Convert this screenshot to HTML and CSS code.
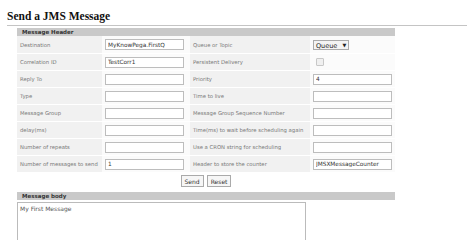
FILE: index.html
```
<!DOCTYPE html>
<html lang="en">
<head>
    <meta charset="UTF-8">
    <title>Send a JMS Message</title>
    <link rel="stylesheet" href="styles.css">
</head>
<body>
    <h1>Send a JMS Message</h1>

    <div class="section">
        <div class="bar">Message Header</div>
        <table class="form">
            <tr>
                <td class="label">Destination</td>
                <td class="field"><input type="text" value="MyKnowPega.FirstQ"></td>
                <td class="label">Queue or Topic</td>
                <td class="field">
                    <span class="select">Queue <span class="arrow">&#9660;</span></span>
                </td>
            </tr>
            <tr>
                <td class="label">Correlation ID</td>
                <td class="field"><input type="text" value="TestCorr1"></td>
                <td class="label">Persistent Delivery</td>
                <td class="field"><span class="check"></span></td>
            </tr>
            <tr>
                <td class="label">Reply To</td>
                <td class="field"><input type="text"></td>
                <td class="label">Priority</td>
                <td class="field"><input type="text" value="4"></td>
            </tr>
            <tr>
                <td class="label">Type</td>
                <td class="field"><input type="text"></td>
                <td class="label">Time to live</td>
                <td class="field"><input type="text"></td>
            </tr>
            <tr>
                <td class="label">Message Group</td>
                <td class="field"><input type="text"></td>
                <td class="label">Message Group Sequence Number</td>
                <td class="field"><input type="text"></td>
            </tr>
            <tr>
                <td class="label">delay(ms)</td>
                <td class="field"><input type="text"></td>
                <td class="label">Time(ms) to wait before scheduling again</td>
                <td class="field"><input type="text"></td>
            </tr>
            <tr>
                <td class="label">Number of repeats</td>
                <td class="field"><input type="text"></td>
                <td class="label">Use a CRON string for scheduling</td>
                <td class="field"><input type="text"></td>
            </tr>
            <tr>
                <td class="label">Number of messages to send</td>
                <td class="field"><input type="text" value="1"></td>
                <td class="label">Header to store the counter</td>
                <td class="field"><input type="text" value="JMSXMessageCounter"></td>
            </tr>
        </table>

        <div class="buttons">
            <button>Send</button>
            <button>Reset</button>
        </div>

        <div class="bar">Message body</div>
        <textarea>My First Message</textarea>
    </div>
</body>
</html>
```

FILE: styles.css
```
body {
    margin: 0;
    padding: 9px 7px 0 7px;
    background-color: white;
    font-family: "DejaVu Sans", Verdana, sans-serif;
    color: #777;
}
h1 {
    font-family: "Liberation Serif", "Times New Roman", serif;
    font-size: 11.5px;
    line-height: 14px;
    font-weight: bold;
    color: #111;
    margin: 0;
    padding-bottom: 2px;
    border-bottom: 1px solid #c4c4c4;
    width: 460px;
}
.section {
    margin: 2px 0 0 10px;
    width: 378px;
}
.bar {
    background-color: #c9c9c9;
    color: #333;
    font-size: 5.5px;
    font-weight: bold;
    height: 8px;
    line-height: 8px;
    padding-left: 5px;
}
.form {
    width: 378px;
    border-collapse: collapse;
    table-layout: fixed;
}
.form td {
    height: 16px;
    padding: 0;
    border-bottom: 1px solid white;
    font-size: 5.3px;
    vertical-align: middle;
}
.form tr:first-child td {
    height: 17px;
}
.form td.label {
    background-color: #f1f1f1;
    padding-left: 3px;
    white-space: nowrap;
}
.form td.field {
    background-color: #fbfbfb;
    padding-left: 3px;
}
.form tr td:nth-child(1) { width: 82px; }
.form tr td:nth-child(2) { width: 85px; }
.form tr td:nth-child(3) { width: 117px; }
.form input[type="text"] {
    box-sizing: border-box;
    width: 79px;
    height: 11px;
    margin: 0;
    padding: 0 2px;
    border: 1px solid #bdbdbd;
    font-family: "DejaVu Sans", Verdana, sans-serif;
    font-size: 5.8px;
    color: #333;
    background-color: white;
}
.select {
    display: inline-block;
    box-sizing: border-box;
    height: 10px;
    line-height: 8px;
    padding: 0 2px;
    border: 1px solid #aaa;
    background-color: #f4f4f4;
    color: #222;
    font-size: 6.5px;
}
.arrow {
    font-size: 5px;
    margin-left: 3px;
    vertical-align: 1px;
}
.check {
    display: inline-block;
    width: 6px;
    height: 6px;
    margin-left: 3px;
    border: 1px solid #c8c8c8;
    border-radius: 1px;
    background-color: #f0f0f0;
}
.buttons {
    display: flex;
    justify-content: center;
    gap: 3px;
    padding: 2px 0 5px 0;
}
button {
    height: 12px;
    padding: 0 3px;
    border: 1px solid #aaa;
    background-color: #f6f6f6;
    font-family: "DejaVu Sans", Verdana, sans-serif;
    font-size: 6px;
    color: #333;
}
textarea {
    display: block;
    box-sizing: border-box;
    width: 289px;
    height: 60px;
    margin-top: 2px;
    padding: 2px;
    border: 1px solid #bbb;
    font-family: "DejaVu Sans", Verdana, sans-serif;
    font-size: 6px;
    color: #555;
    resize: none;
}
```
